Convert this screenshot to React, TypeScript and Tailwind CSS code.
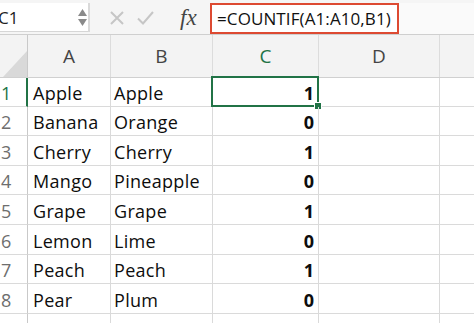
import React from "react";

type Row = [string, string, number];

const rows: Row[] = [
  ["Apple", "Apple", 1],
  ["Banana", "Orange", 0],
  ["Cherry", "Cherry", 1],
  ["Mango", "Pineapple", 0],
  ["Grape", "Grape", 1],
  ["Lemon", "Lime", 0],
  ["Peach", "Peach", 1],
  ["Pear", "Plum", 0],
  ["Kiwi", "Kiwi", 1],
];

// row heights incl. bottom gridline, taken from the screenshot
const rowHeights = ["h-[29px]", "h-[29px]", "h-[30px]", "h-[29px]", "h-[30px]", "h-[30px]", "h-[29px]", "h-[30px]", "h-[30px]"];

const FormulaBar = () => (
  <div className="flex h-[35px] bg-[#f5f5f5] border-b border-[#cfcfcf] pt-[3px] shrink-0">
    <div className="flex w-[88px] h-[29px] bg-white items-center justify-between border-b border-[#d6d6d6]">
      <span className="ml-[-2px] text-[17px] text-[#222] leading-none">C1</span>
      <div className="flex flex-col items-center gap-[3px] mr-[1px]">
        <svg width="9" height="7" viewBox="0 0 9 7">
          <path d="M4.5 0 L9 7 L0 7 Z" fill="#8a8a8a" />
        </svg>
        <svg width="9" height="7" viewBox="0 0 9 7">
          <path d="M0 0 L9 0 L4.5 7 Z" fill="#8a8a8a" />
        </svg>
      </div>
    </div>
    <div className="w-[2px] h-[29px] bg-[#d9d9d9]" />
    <div className="flex w-[120px] items-center h-[29px]">
      <svg className="ml-[20px]" width="14" height="14" viewBox="0 0 14 14">
        <path d="M1 1 L13 13 M13 1 L1 13" stroke="#c6c6c6" strokeWidth="2" />
      </svg>
      <svg className="ml-[13px]" width="17" height="14" viewBox="0 0 17 14">
        <path d="M1 7.5 L6 12.5 L16 1" stroke="#c6c6c6" strokeWidth="2" fill="none" />
      </svg>
      <span className="ml-[26px] text-[23px] italic text-[#444] font-['Liberation_Serif',serif] leading-none">fx</span>
    </div>
    <div className="flex items-center w-[189px] h-[31px] border-2 border-[#dd4a32] bg-white pl-[5px] text-[17px] text-[#111] tracking-[0.1px] leading-none">
      =COUNTIF(A1:A10,B1)
    </div>
    <div className="flex-1 h-[31px] bg-[#fafafa]" />
  </div>
);

const HeaderRow = () => (
  <div className="flex h-[43px] bg-[#f3f3f3] border-b border-[#d0d0d0] shrink-0 text-[19px]">
    <div className="relative w-[28px] border-r border-[#c9c9c9] overflow-hidden">
      <svg className="absolute right-0 bottom-0" width="24" height="26" viewBox="0 0 24 26">
        <path d="M24 0 L24 26 L0 26 Z" fill="#d9d9d9" />
      </svg>
    </div>
    <div className="w-[83px] flex items-center justify-center border-r border-[#dcdcdc] text-[#444]">A</div>
    <div className="w-[102px] flex items-center justify-center border-r border-[#dcdcdc] text-[#444]">B</div>
    <div className="relative w-[106px] flex items-center justify-center border-r border-[#dcdcdc] text-[#217346]">
      C
      <div className="absolute left-0 right-0 bottom-[-1px] h-[2px] bg-[#217346]" />
    </div>
    <div className="w-[121px] flex items-center justify-center border-r border-[#dcdcdc] text-[#444]">D</div>
    <div className="flex-1" />
  </div>
);

export default function App() {
  return (
    <div className="w-[474px] h-[323px] overflow-hidden bg-white flex flex-col font-['Open_Sans',sans-serif] text-[#0d0d0d]">
      <FormulaBar />
      <HeaderRow />
      {rows.map(([a, b, c], i) => (
        <div key={i} className={`flex shrink-0 ${rowHeights[i]} text-[18px] leading-none`}>
          <div
            className={`w-[28px] flex items-center pl-[1px] pt-[2px] border-b border-[#dadada] ${
              i === 0 ? "border-r-2 border-r-[#217346] text-[#217346]" : "border-r border-r-[#c9c9c9] text-[#6e6e6e]"
            }`}
          >
            {i + 1}
          </div>
          <div className="w-[83px] flex items-center pl-[5px] pt-[2px] border-r border-b border-[#dadada] tracking-[0.3px]">{a}</div>
          <div className="w-[102px] flex items-center pl-[3px] pt-[2px] border-r border-b border-[#dadada] tracking-[0.3px]">{b}</div>
          <div className="relative w-[106px] flex items-center justify-end pr-[4px] pt-[2px] border-r border-b border-[#dadada] font-bold">
            {c}
            {i === 0 && (
              <>
                <div className="absolute left-[-2px] top-[-2px] w-[108px] h-[31px] border-2 border-[#217346]" />
                <div className="absolute right-[-3px] bottom-[-3px] w-[6px] h-[6px] bg-[#217346] outline outline-1 outline-white" />
              </>
            )}
          </div>
          <div className="w-[121px] border-r border-b border-[#dadada]" />
          <div className="flex-1 border-b border-[#dadada]" />
        </div>
      ))}
    </div>
  );
}
